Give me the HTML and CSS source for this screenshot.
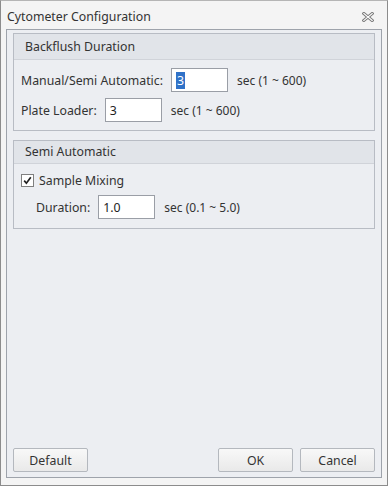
FILE: index.html
```html
<!DOCTYPE html>
<html>
<head>
<meta charset="utf-8">
<link rel="stylesheet" href="styles.css">
</head>
<body>
<div class="window">
  <div class="titlebar">
    <span class="title">Cytometer Configuration</span>
    <svg class="close" width="12" height="10" viewBox="0 0 12 10">
      <path d="M1.8 1.5 L10.2 8.5 M10.2 1.5 L1.8 8.5" stroke="#7a7a7a" stroke-width="3" stroke-linecap="square" fill="none"/>
      <path d="M1.8 1.5 L10.2 8.5 M10.2 1.5 L1.8 8.5" stroke="#ffffff" stroke-width="1.1" stroke-linecap="square" fill="none"/>
    </svg>
  </div>
  <div class="panel">
    <div class="group g1">
      <div class="ghead">Backflush Duration</div>
      <div class="gbody">
        <div class="row">
          <span class="lbl">Manual/Semi Automatic:</span>
          <span class="inp"><span class="sel">3</span></span>
          <span class="unit">sec (1 ~ 600)</span>
        </div>
        <div class="row">
          <span class="lbl">Plate Loader:</span>
          <span class="inp">3</span>
          <span class="unit">sec (1 ~ 600)</span>
        </div>
      </div>
    </div>
    <div class="group g2">
      <div class="ghead">Semi Automatic</div>
      <div class="gbody">
        <div class="row chkrow">
          <span class="chk">
            <svg width="9" height="9" viewBox="0 0 9 9"><path d="M1.2 4.6 L3.4 7.2 L7.8 1.2" stroke="#222" stroke-width="1.7" fill="none"/></svg>
          </span>
          <span class="lbl">Sample Mixing</span>
        </div>
        <div class="row indent">
          <span class="lbl">Duration:</span>
          <span class="inp">1.0</span>
          <span class="unit">sec (0.1 ~ 5.0)</span>
        </div>
      </div>
    </div>
    <div class="spacer"></div>
    <div class="buttons">
      <button class="btn">Default</button>
      <div class="right">
        <button class="btn">OK</button>
        <button class="btn">Cancel</button>
      </div>
    </div>
  </div>
</div>
</body>
</html>
```

FILE: styles.css
```css
html, body {
  margin: 0;
  padding: 0;
  background: #f3f3f3;
}
body {
  font-family: "Noto Sans", "Open Sans", sans-serif;
  font-size: 12px;
  color: #333;
}
.window {
  width: 388px;
  height: 486px;
  box-sizing: border-box;
  border: 1px solid #8c8c8c;
  border-top-color: #b5b5b5;
  background: #f4f4f4;
  display: flex;
  flex-direction: column;
}
.titlebar {
  height: 28px;
  display: flex;
  align-items: center;
  justify-content: space-between;
  padding: 0 13px 0 6px;
  flex: none;
}
.title {
  font-size: 12.3px;
  color: #333;
  margin-top: 2px;
}
.close {
  display: block;
  margin-top: 3px;
}
.panel {
  flex: 1;
  margin: 0 5px 7px 5px;
  border: 1px solid #9ea3ab;
  background: #eceef2;
  padding: 3px 6px 5px 6px;
  display: flex;
  flex-direction: column;
}
.group {
  border: 1px solid #b8bcc4;
  background: #eceef2;
}
.g2 {
  margin-top: 9px;
}
.ghead {
  height: 25px;
  line-height: 25px;
  background: #e1e4e9;
  border-bottom: 1px solid #d0d3d9;
  padding-left: 11px;
  font-size: 12.3px;
  color: #333;
}
.g1 .gbody {
  padding: 8px 7px 8px 7px;
  display: flex;
  flex-direction: column;
  gap: 6px;
}
.g2 .ghead {
  height: 22px;
  line-height: 22px;
}
.g2 .gbody {
  padding: 9px 7px 9px 7px;
  display: flex;
  flex-direction: column;
  gap: 8px;
}
.row {
  display: flex;
  align-items: center;
  height: 24px;
}
.chkrow {
  height: 14px;
}
.lbl {
  margin-right: 8px;
  font-size: 12.3px;
}
.inp {
  display: flex;
  align-items: center;
  padding-left: 4px;
  box-sizing: border-box;
  width: 57px;
  height: 24px;
  border: 1px solid #9a9ea6;
  background: #fff;
  font-size: 12.3px;
  color: #222;
  margin-right: 9px;
}
.sel {
  background: #3072c8;
  color: #fff;
  padding: 0 1px;
  line-height: 17px;
}
.unit {
  font-size: 12px;
}
.chk {
  width: 11px;
  height: 11px;
  border: 1px solid #808080;
  background: #fff;
  display: flex;
  align-items: center;
  justify-content: center;
  margin-right: 5px;
}
.chk svg {
  display: block;
}
.indent {
  padding-left: 15px;
}
.spacer {
  flex: 1;
}
.buttons {
  display: flex;
  justify-content: space-between;
}
.right {
  display: flex;
  gap: 7px;
}
.btn {
  width: 75px;
  height: 24px;
  border: 1px solid #b4b8be;
  border-radius: 2px;
  background: linear-gradient(#f8f8f8, #e9e9e9);
  font-family: "Noto Sans", "Open Sans", sans-serif;
  font-size: 12.3px;
  color: #333;
  padding: 0;
}
```
